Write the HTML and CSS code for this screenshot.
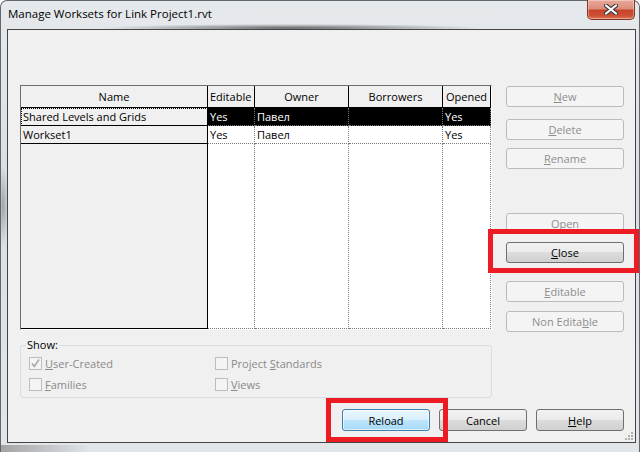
FILE: index.html
```html
<!DOCTYPE html>
<html lang="en">
<head>
    <meta charset="UTF-8">
    <title>Manage Worksets for Link Project1.rvt</title>
    <link rel="stylesheet" href="styles.css">
</head>
<body>
    <div class="screen">
        <div class="window">
            <div class="titlebar">
                <span class="title">Manage Worksets for Link Project1.rvt</span>
                <button class="close-x" title="Close">
                    <svg width="14" height="11" viewBox="0 0 14 11">
                        <path d="M2 1.5 L12 9.5 M12 1.5 L2 9.5" stroke="#3b3b3b" stroke-width="4.2" stroke-linecap="round"/>
                        <path d="M2 1.5 L12 9.5 M12 1.5 L2 9.5" stroke="#ffffff" stroke-width="2.2" stroke-linecap="round"/>
                    </svg>
                </button>
            </div>

            <div class="client">
                <div class="main-row">
                    <div class="ws-grid">
                        <div class="cell head center">Name</div>
                        <div class="cell head">Editable</div>
                        <div class="cell head center">Owner</div>
                        <div class="cell head center">Borrowers</div>
                        <div class="cell head center">Opened</div>

                        <div class="cell fixed focus">Shared Levels and Grids</div>
                        <div class="cell data selected">Yes</div>
                        <div class="cell data selected">Павел</div>
                        <div class="cell data selected"></div>
                        <div class="cell data selected">Yes</div>

                        <div class="cell fixed">Workset1</div>
                        <div class="cell data">Yes</div>
                        <div class="cell data">Павел</div>
                        <div class="cell data"></div>
                        <div class="cell data">Yes</div>

                        <div class="cell fixed filler"></div>
                        <div class="cell data filler"></div>
                        <div class="cell data filler"></div>
                        <div class="cell data filler"></div>
                        <div class="cell data filler"></div>
                    </div>

                    <div class="side-buttons">
                        <button class="btn" disabled><u>N</u>ew</button>
                        <button class="btn gap-12" disabled><u>D</u>elete</button>
                        <button class="btn gap-8" disabled><u>R</u>ename</button>
                        <button class="btn gap-44" disabled>Open</button>
                        <button class="btn gap-8"><u>C</u>lose</button>
                        <button class="btn gap-18" disabled><u>E</u>ditable</button>
                        <button class="btn gap-9" disabled>Non Edita<u>b</u>le</button>
                    </div>
                </div>

                <fieldset class="show-group">
                    <legend>Show:</legend>
                    <div class="checks">
                        <label class="chk">
                            <span class="box"><svg width="11" height="11" viewBox="0 0 11 11"><path d="M2 5.5 L4.3 8.5 L9 1.5" fill="none" stroke="#a8a8a8" stroke-width="1.6"/></svg></span>
                            <span><u>U</u>ser-Created</span>
                        </label>
                        <label class="chk">
                            <span class="box"></span>
                            <span>Project <u>S</u>tandards</span>
                        </label>
                        <label class="chk">
                            <span class="box"></span>
                            <span><u>F</u>amilies</span>
                        </label>
                        <label class="chk">
                            <span class="box"></span>
                            <span><u>V</u>iews</span>
                        </label>
                    </div>
                </fieldset>

                <div class="footer">
                    <button class="btn wide default">Reload</button>
                    <button class="btn wide">Cancel</button>
                    <button class="btn wide"><u>H</u>elp</button>
                </div>

                <div class="grip"></div>
            </div>
        </div>

        <div class="mark mark-close"></div>
        <div class="mark mark-reload"></div>
    </div>
</body>
</html>
```

FILE: styles.css
```css
body {
    margin: 0;
    background-color: #ffffff;
    font-family: 'Open Sans', 'Noto Sans', sans-serif;
    font-size: 11px;
    color: #000000;
}

.screen {
    position: relative;
    width: 643px;
    height: 452px;
    overflow: hidden;
}

.window {
    box-sizing: border-box;
    width: 640px;
    height: 460px;
    padding: 0 3px 0 6px;
    border: 1px solid #62676d;
    border-bottom: none;
    border-radius: 7px 7px 0 0;
    background:
        radial-gradient(ellipse 190px 4px at 290px 27px, rgba(0, 0, 0, 0.55), rgba(0, 0, 0, 0)),
        radial-gradient(ellipse 6px 40px at 2px 205px, rgba(60, 60, 60, 0.35), rgba(0, 0, 0, 0)),
        linear-gradient(to right, rgba(40, 40, 40, 0.35), rgba(0, 0, 0, 0) 90px) 0 444px / 100% 8px no-repeat,
        linear-gradient(to bottom, #e6e9ec, #dadee3 40%, #e3e6e9);
}

.titlebar {
    display: flex;
    justify-content: space-between;
    align-items: flex-start;
    height: 28px;
}

.title {
    padding-top: 5px;
    padding-left: 1px;
    font-size: 11.5px;
    line-height: 16px;
    color: #000000;
}

.close-x {
    display: flex;
    align-items: center;
    justify-content: center;
    box-sizing: border-box;
    width: 48px;
    height: 20px;
    margin: -1px 1px 0 0;
    padding: 0;
    border: 1px solid #7e3627;
    border-top: none;
    border-radius: 0 0 5px 5px;
    background: linear-gradient(to bottom, #e9a99a 0%, #dc8d7b 45%, #c6432a 55%, #cf5236 85%, #e07a5c 100%);
    box-shadow: inset 0 0 0 1px rgba(255, 255, 255, 0.35);
}

.client {
    position: relative;
    box-sizing: border-box;
    width: 629px;
    height: 414px;
    padding: 55px 11px 0 12px;
    border: 1px solid #444444;
    background-color: #f0f0f0;
}

.main-row {
    display: flex;
    align-items: flex-start;
}

.ws-grid {
    box-sizing: border-box;
    display: grid;
    grid-template-columns: 187px 47px 94px 94px 48px;
    grid-template-rows: 22px 18px 18px 185px;
    width: 472px;
    border-top: 1px solid #6d6d6d;
    border-left: 1px solid #6d6d6d;
    border-right: 1px solid #ffffff;
    border-bottom: 1px solid #ffffff;
}

.cell {
    box-sizing: border-box;
    padding-left: 2px;
    line-height: 17px;
    white-space: nowrap;
    overflow: hidden;
}

.head {
    line-height: 21px;
    background-color: #f0f0f0;
    border-right: 1px solid #000000;
    border-bottom: 1px solid #000000;
}

.center {
    padding-left: 0;
    text-align: center;
}

.fixed {
    background-color: #f0f0f0;
    border-right: 1px solid #000000;
    border-bottom: 1px solid #000000;
}

.focus {
    outline: 1px dotted #000000;
    outline-offset: -1px;
}

.data {
    background-color: #ffffff;
    border-right: 1px dotted #7a7a7a;
    border-bottom: 1px dotted #7a7a7a;
}

.selected {
    background-color: #000000;
    color: #ffffff;
}

.side-buttons {
    display: flex;
    flex-direction: column;
    width: 118px;
    margin-left: 14px;
    margin-top: 1px;
}

.btn {
    box-sizing: border-box;
    height: 21px;
    padding: 0;
    border: 1px solid #707070;
    border-radius: 3px;
    background: linear-gradient(to bottom, #f2f2f2 0%, #ebebeb 49%, #dddddd 50%, #cfcfcf 100%);
    font-family: 'Open Sans', 'Noto Sans', sans-serif;
    font-size: 11px;
    color: #000000;
}

.btn:disabled {
    border-color: #b9bcbf;
    background: #f4f4f4;
    color: #8e8e8e;
}

.btn.default {
    border-color: #3c7fb1;
    background: linear-gradient(to bottom, #eaf6fd 0%, #d9f0fc 49%, #bee6fd 50%, #a7d9f5 100%);
    box-shadow: inset 0 0 0 1px rgba(255, 255, 255, 0.6);
}

.gap-8 { margin-top: 8px; }
.gap-9 { margin-top: 9px; }
.gap-12 { margin-top: 12px; }
.gap-18 { margin-top: 18px; }
.gap-44 { margin-top: 44px; }

.show-group {
    box-sizing: border-box;
    width: 472px;
    margin: 6px 0 0 0;
    padding: 1px 8px 2px 8px;
    border: 1px solid #d5dfe5;
    border-radius: 3px;
}

.show-group legend {
    margin-left: -3px;
    padding: 0 1px;
    line-height: 14px;
    color: #000000;
}

.checks {
    display: grid;
    grid-template-columns: 186px 1fr;
    grid-auto-rows: 21px;
}

.chk {
    display: flex;
    align-items: center;
    gap: 3px;
    color: #8a8a8a;
}

.box {
    box-sizing: border-box;
    display: flex;
    align-items: center;
    justify-content: center;
    width: 13px;
    height: 13px;
    border: 1px solid #bcbcbc;
    background-color: #f4f4f4;
}

.footer {
    display: flex;
    justify-content: flex-end;
    gap: 9px;
    margin-top: 11px;
}

.btn.wide {
    width: 88px;
    height: 22px;
}

.grip {
    position: absolute;
    right: 2px;
    bottom: 2px;
    width: 2px;
    height: 2px;
    background-color: #b0b0b0;
    box-shadow: -3px 0 #b0b0b0, -6px 0 #b0b0b0, 0 -3px #b0b0b0, -3px -3px #b0b0b0, 0 -6px #b0b0b0;
}

.mark {
    position: absolute;
    box-sizing: border-box;
    border: 5px solid #ed1c24;
}

.mark-close {
    left: 488px;
    top: 229px;
    width: 151px;
    height: 44px;
}

.mark-reload {
    left: 326px;
    top: 398px;
    width: 122px;
    height: 44px;
}
```
